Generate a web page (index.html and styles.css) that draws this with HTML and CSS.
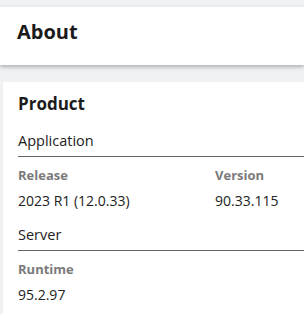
FILE: index.html
```html
<!DOCTYPE html>
<html>
<head>
<meta charset="utf-8">
<link rel="stylesheet" href="styles.css">
</head>
<body>
<header class="page-header"><h1 class="page-title">About</h1></header>
<main class="card">
  <h2 class="card-title">Product</h2>
  <section class="group">
    <h3 class="group-title">Application</h3>
    <div class="fields">
      <div class="field"><div class="label">Release</div><div class="value">2023 R1 (12.0.33)</div></div>
      <div class="field"><div class="label">Version</div><div class="value">90.33.115</div></div>
    </div>
  </section>
  <section class="group">
    <h3 class="group-title">Server</h3>
    <div class="fields">
      <div class="field"><div class="label">Runtime</div><div class="value">95.2.97</div></div>
    </div>
  </section>
</main>
</body>
</html>
```
FILE: styles.css
```css
html, body { margin: 0; padding: 0; }
body {
  background: #eff1f3;
  font-family: "Open Sans", "Noto Sans", sans-serif;
  color: #222;
  overflow: hidden;
  height: 314px;
}
.page-header {
  margin-top: 7px;
  height: 58px;
  box-sizing: border-box;
  background: #fff;
  box-shadow: 0 2px 4px rgba(0,0,0,0.28);
  display: flex;
  align-items: flex-start;
  padding: 11px 0 0 17px;
}
.page-title {
  margin: 0;
  font-size: 20px;
  font-weight: 700;
  color: #1b1b1b;
}
.card {
  margin: 17px 0 0 3px;
  width: 420px;
  background: #fff;
  padding: 10px 0 20px 15px;
  min-height: 300px;
}
.card-title {
  margin: 0 0 16px;
  font-size: 17px;
  font-weight: 700;
  color: #1b1b1b;
}
.group-title {
  margin: 0;
  font-size: 14.5px;
  font-weight: 400;
  color: #222;
  padding-bottom: 6px;
  border-bottom: 1px solid #666;
}
.fields {
  display: grid;
  grid-template-columns: 197px 197px;
  padding-top: 9px;
}
.label {
  font-size: 13px;
  font-weight: 700;
  color: #7a7a7a;
}
.value {
  font-size: 14px;
  margin-top: 7px;
  color: #222;
  margin-bottom: 15px;
}
```
